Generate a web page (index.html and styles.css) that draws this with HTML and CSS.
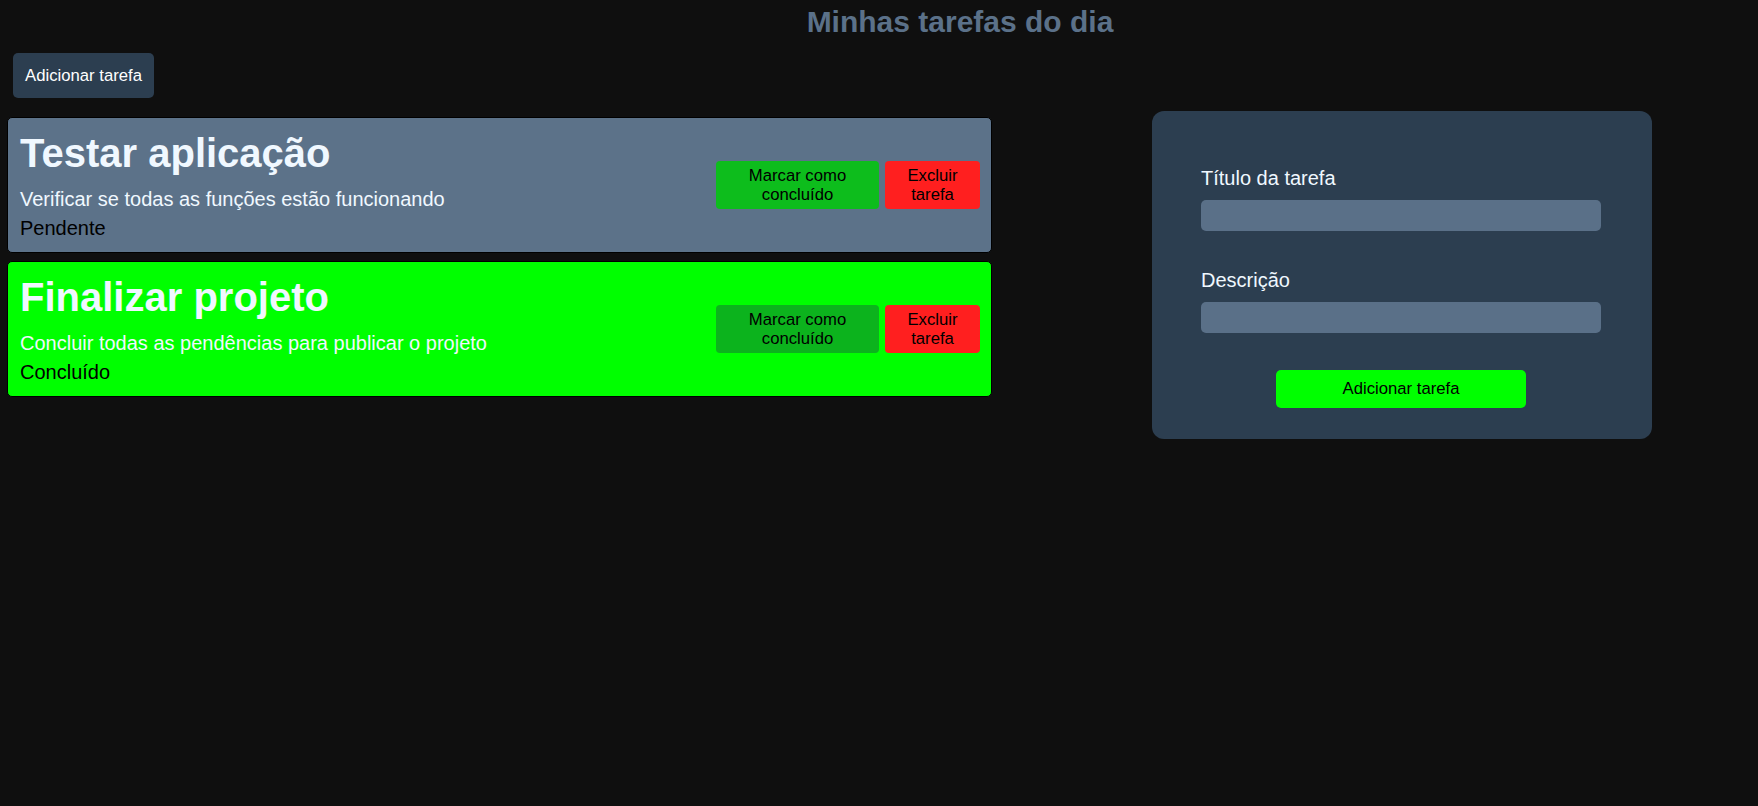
FILE: index.html
```html
<!DOCTYPE html>
<html>
    <head>
        <title>Minhas tarefas</title>
        <meta charset="UTF-8">
        <meta name="viewport" content="width=device-width, initial-scale=1.0">
        <link rel="stylesheet" href="styles.css">
    </head>
    <body>
        <h2 class="page-title">Minhas tarefas do dia</h2>

        <button class="btn-toggle">Adicionar tarefa</button>

        <div class="main">

            <div class="task-list">
                <div class="task">
                    <div class="task-info">
                        <h1 class="task-title">Testar aplicação</h1>
                        <p class="task-desc">Verificar se todas as funções estão funcionando</p>
                        <p class="task-status">Pendente</p>
                    </div>
                    <div class="task-actions">
                        <button class="btn-done">Marcar como concluído</button>
                        <button class="btn-delete">Excluir tarefa</button>
                    </div>
                </div>
                <div class="task done">
                    <div class="task-info">
                        <h1 class="task-title">Finalizar projeto</h1>
                        <p class="task-desc">Concluir todas as pendências para publicar o projeto</p>
                        <p class="task-status">Concluído</p>
                    </div>
                    <div class="task-actions">
                        <button class="btn-done">Marcar como concluído</button>
                        <button class="btn-delete">Excluir tarefa</button>
                    </div>
                </div>
            </div>

            <form class="task-form">
                <div class="form-group">
                    <label for="titulo">Título da tarefa</label>
                    <input type="text" id="titulo">
                </div>
                <div class="form-group">
                    <label for="descricao">Descrição</label>
                    <input type="text" id="descricao">
                </div>
                <button type="button" class="btn-add">Adicionar tarefa</button>
            </form>

        </div>
    </body>
</html>
```

FILE: styles.css
```css
body {
    margin: 0;
    background-color: #0f0f0f;
    font-family: "Liberation Sans", Arial, sans-serif;
}

button {
    font-family: "Liberation Sans", Arial, sans-serif;
    font-size: 16.7px;
    cursor: pointer;
}

.page-title {
    margin: 5px 0 0;
    padding-left: 162px;
    text-align: center;
    font-size: 30px;
    color: #5b7189;
}

.btn-toggle {
    display: block;
    margin: 14px 0 0 13px;
    width: 141px;
    height: 45px;
    border: none;
    border-radius: 5px;
    background-color: #2c3e50;
    color: #ffffff;
}

.main {
    display: flex;
    align-items: flex-start;
}

.task-list {
    display: flex;
    flex-direction: column;
    gap: 8px;
    margin: 19px 0 0 7px;
    width: 985px;
}

.task {
    display: flex;
    justify-content: space-between;
    align-items: center;
    padding: 12px 11px 12px 12px;
    border: 1px solid #000;
    border-radius: 5px;
    background-color: #5c7289;
}

.task.done {
    background-color: #00ff00;
}

.task-title {
    margin: 0 0 12px;
    font-size: 40px;
    line-height: 46px;
    color: #f0f8ff;
}

.task-desc {
    margin: 0 0 6px;
    font-size: 20px;
    line-height: 23px;
    color: #f0f8ff;
}

.task-status {
    margin: 0;
    font-size: 20px;
    line-height: 23px;
    color: #000;
}

.task-actions {
    display: flex;
    gap: 6px;
}

.task-actions button {
    height: 48px;
    padding: 0 6px;
    border: none;
    border-radius: 4px;
    color: #000;
    line-height: 19px;
}

.btn-done {
    width: 163px;
    background-color: #0dbd1c;
}

.task.done .btn-done {
    background-color: #0cb31d;
}

.btn-delete {
    width: 95px;
    background-color: #ff1f1f;
}

.task-form {
    display: flex;
    flex-direction: column;
    margin: 13px 0 0 160px;
    padding: 56px 51px 31px 49px;
    width: 400px;
    border-radius: 12px;
    background-color: #2c3e50;
}

.form-group {
    margin-bottom: 37px;
}

.form-group:first-child {
    margin-bottom: 38px;
}

.form-group label {
    display: block;
    margin-bottom: 10px;
    font-size: 20px;
    line-height: 23px;
    color: #f0f8ff;
}

.form-group input {
    display: block;
    box-sizing: border-box;
    width: 400px;
    height: 31px;
    border: none;
    border-radius: 5px;
    background-color: #5a7088;
}

.btn-add {
    align-self: center;
    width: 250px;
    height: 38px;
    border: none;
    border-radius: 5px;
    background-color: #00ff00;
    color: #000;
}
```
